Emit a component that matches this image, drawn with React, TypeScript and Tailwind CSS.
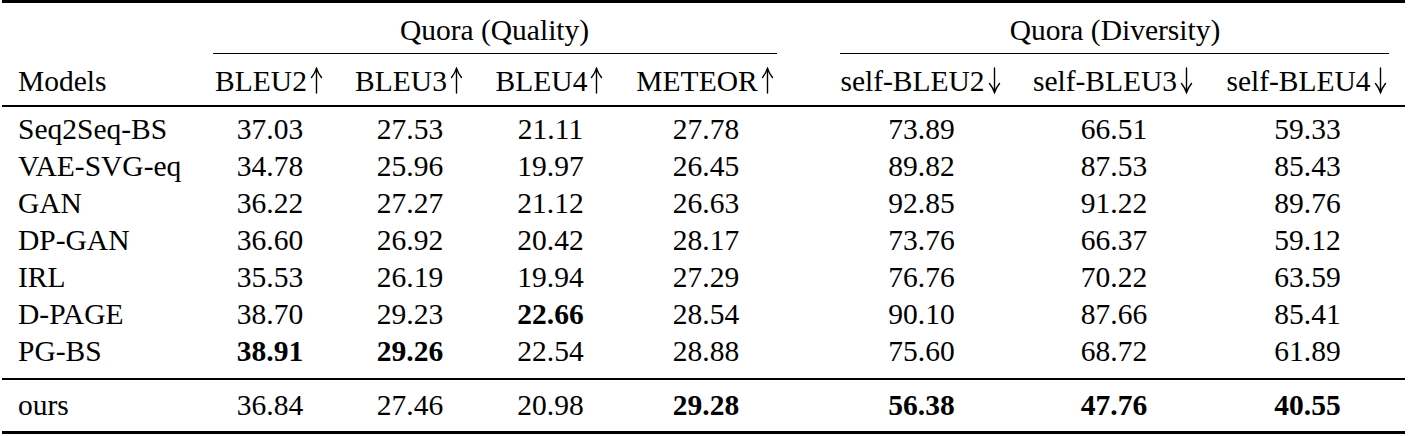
const COLS = "grid grid-cols-[197px_142px_138px_143px_168px_35px_193px_192px_195px]";

type Cell = { v: string; b?: boolean };

const rows: Cell[][] = [
  [{ v: "Seq2Seq-BS" }, { v: "37.03" }, { v: "27.53" }, { v: "21.11" }, { v: "27.78" }, { v: "73.89" }, { v: "66.51" }, { v: "59.33" }],
  [{ v: "VAE-SVG-eq" }, { v: "34.78" }, { v: "25.96" }, { v: "19.97" }, { v: "26.45" }, { v: "89.82" }, { v: "87.53" }, { v: "85.43" }],
  [{ v: "GAN" }, { v: "36.22" }, { v: "27.27" }, { v: "21.12" }, { v: "26.63" }, { v: "92.85" }, { v: "91.22" }, { v: "89.76" }],
  [{ v: "DP-GAN" }, { v: "36.60" }, { v: "26.92" }, { v: "20.42" }, { v: "28.17" }, { v: "73.76" }, { v: "66.37" }, { v: "59.12" }],
  [{ v: "IRL" }, { v: "35.53" }, { v: "26.19" }, { v: "19.94" }, { v: "27.29" }, { v: "76.76" }, { v: "70.22" }, { v: "63.59" }],
  [{ v: "D-PAGE" }, { v: "38.70" }, { v: "29.23" }, { v: "22.66", b: true }, { v: "28.54" }, { v: "90.10" }, { v: "87.66" }, { v: "85.41" }],
  [{ v: "PG-BS" }, { v: "38.91", b: true }, { v: "29.26", b: true }, { v: "22.54" }, { v: "28.88" }, { v: "75.60" }, { v: "68.72" }, { v: "61.89" }],
];

const ours: Cell[] = [
  { v: "ours" }, { v: "36.84" }, { v: "27.46" }, { v: "20.98" }, { v: "29.28", b: true },
  { v: "56.38", b: true }, { v: "47.76", b: true }, { v: "40.55", b: true },
];

// metric name + whether higher is better
const headers: [string, boolean][] = [
  ["BLEU2", true],
  ["BLEU3", true],
  ["BLEU4", true],
  ["METEOR", true],
  ["self-BLEU2", false],
  ["self-BLEU3", false],
  ["self-BLEU4", false],
];

// thin LaTeX-style \uparrow / \downarrow
function Arrow({ up }: { up: boolean }) {
  return (
    <svg
      width="17"
      height="27"
      viewBox="0 0 17 27"
      className="inline-block align-[-3px] ml-[1px]"
      fill="none"
      stroke="black"
      strokeWidth="1.4"
      strokeLinecap="round"
      style={{ transform: up ? undefined : "scaleY(-1)" }}
    >
      <path d="M8.5 1.5V26" />
      <path d="M3.5 10.5Q7 6 8.5 1.5Q10 6 13.5 10.5" />
    </svg>
  );
}

function Row({ cells }: { cells: Cell[] }) {
  return (
    <div className={COLS}>
      {cells.map((c, i) => [
        i === 5 ? <div key="sp" /> : null,
        <div
          key={i}
          className={`${i === 0 ? "pl-[16px] text-left" : "text-center"} ${c.b ? "font-bold" : ""}`}
        >
          {c.v}
        </div>,
      ])}
    </div>
  );
}

export default function App() {
  return (
    <div className="w-[1409px] h-[436px] bg-white text-black">
      <div
        className="ml-[2px] w-[1403px] text-[29.5px] leading-[37px] whitespace-nowrap"
        style={{ fontFamily: '"Liberation Serif", "Times New Roman", serif' }}
      >
        <div className="h-[3px] bg-black" />

        <div className={`${COLS} pt-[8.5px] pb-[4.5px]`}>
          <div />
          <div className="col-span-4 text-center">Quora (Quality)</div>
          <div />
          <div className="col-span-3 text-center">Quora (Diversity)</div>
        </div>

        <div className={`${COLS} h-[1px]`}>
          <div />
          <div className="col-span-4 ml-[14px] mr-[13px] bg-black" />
          <div />
          <div className="col-span-3 ml-[15px] mr-[16px] bg-black" />
        </div>

        <div className={`${COLS} pt-[8.5px] pb-[5.5px]`}>
          <div className="pl-[16px]">Models</div>
          {headers.map(([h, up], i) => [
            i === 4 ? <div key="sp" /> : null,
            <div key={h} className="text-center">
              {h}
              <Arrow up={up} />
            </div>,
          ])}
        </div>

        <div className="h-[2px] bg-black" />

        <div className="pt-[3.5px] pb-[8.5px]">
          {rows.map((r, i) => (
            <Row key={i} cells={r} />
          ))}
        </div>

        <div className="h-[2px] bg-black" />

        <div className="pt-[7px] pb-[7px]">
          <Row cells={ours} />
        </div>

        <div className="h-[3px] bg-black" />
      </div>
    </div>
  );
}
